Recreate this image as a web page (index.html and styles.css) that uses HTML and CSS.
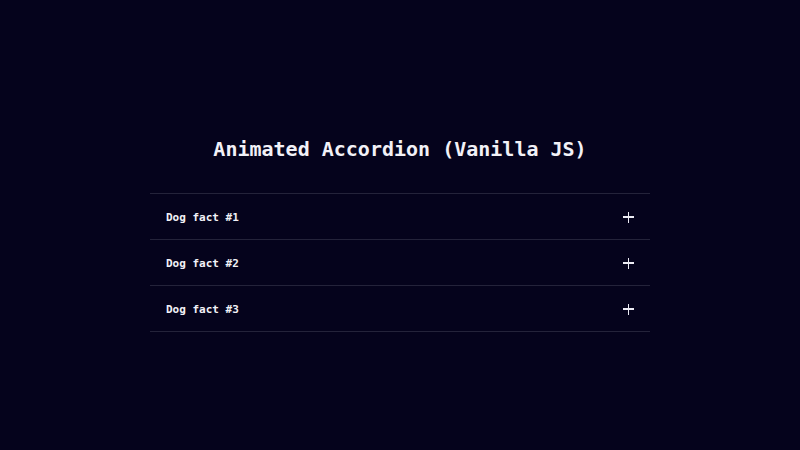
FILE: index.html
```html
<!DOCTYPE html>
<html lang="en">
<head>
	<meta charset="UTF-8">
	<meta name="viewport" content="width=device-width, initial-scale=1.0">
	<title>Animated Accordion</title>
	<link rel="stylesheet" href="styles.css">
</head>
<body>
	<main class="page">
		<h1 class="title">Animated Accordion (Vanilla JS)</h1>
		<section class="accordion">
			<div class="accordion-item">
				<button class="accordion-head">
					<span class="accordion-label">Dog fact #1</span>
					<span class="accordion-icon"></span>
				</button>
			</div>
			<div class="accordion-item">
				<button class="accordion-head">
					<span class="accordion-label">Dog fact #2</span>
					<span class="accordion-icon"></span>
				</button>
			</div>
			<div class="accordion-item">
				<button class="accordion-head">
					<span class="accordion-label">Dog fact #3</span>
					<span class="accordion-icon"></span>
				</button>
			</div>
		</section>
	</main>
</body>
</html>
```

FILE: styles.css
```css
* {
	box-sizing: border-box;
	margin: 0;
	padding: 0;
}

body {
	background-color: #05031c;
	color: #f2f1f7;
	font-family: "DejaVu Sans Mono", "Liberation Mono", monospace;
}

.page {
	width: 500px;
	margin: 0 auto;
	padding-top: 137px;
}

.title {
	font-size: 20px;
	line-height: 24px;
	font-weight: bold;
	text-align: center;
	margin-bottom: 32px;
}

.accordion {
	border-top: 1px solid #24233a;
}

.accordion-item {
	border-bottom: 1px solid #24233a;
}

.accordion-head {
	display: flex;
	align-items: center;
	justify-content: space-between;
	width: 100%;
	height: 45px;
	padding: 1px 16px 0;
	background: none;
	border: none;
	color: inherit;
	font-family: inherit;
	font-size: 11px;
	font-weight: bold;
	cursor: pointer;
}

/* plus sign made of two bars */
.accordion-icon {
	position: relative;
	width: 11px;
	height: 11px;
}

.accordion-icon::before,
.accordion-icon::after {
	content: "";
	position: absolute;
	background-color: #ecebf3;
}

.accordion-icon::before {
	left: 0;
	top: 4.75px;
	width: 11px;
	height: 1.5px;
}

.accordion-icon::after {
	left: 4.75px;
	top: 0;
	width: 1.5px;
	height: 11px;
}
```
